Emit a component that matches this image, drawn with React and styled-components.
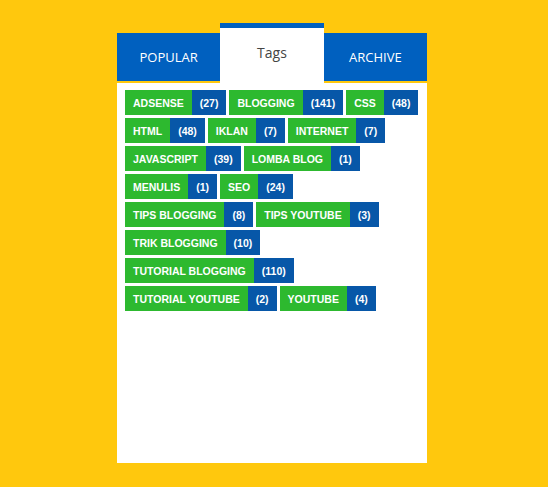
import React from "react";
import styled, { createGlobalStyle } from "styled-components";

const Global = createGlobalStyle`
  html, body { margin: 0; padding: 0; background: #ffc80d; }
  body { font-family: "Liberation Sans", Arial, sans-serif; }
`;

const Page = styled.div`
  padding: 23px 0 0 117px;
  min-height: 487px;
  box-sizing: border-box;
`;

const Widget = styled.div`
  width: 310px;
`;

const TabBar = styled.div`
  display: flex;
  align-items: flex-end;
  height: 60px;
`;

const Tab = styled.div`
  flex: 1;
  display: flex;
  align-items: center;
  justify-content: center;
  box-sizing: border-box;
  font-family: "Open Sans", sans-serif;
  ${(p) =>
    p.$active
      ? `
    height: 60px;
    background: #fff;
    border-top: 5px solid #0060bf;
    color: #444;
    font-size: 14px;
    padding-bottom: 6px;
  `
      : `
    height: 48px;
    margin-bottom: 2px;
    background: #0060bf;
    color: #fff;
    font-size: 13px;
  `}
`;

const Panel = styled.div`
  background: #fff;
  height: 380px;
  box-sizing: border-box;
  padding: 7px 8px 0 8px;
  display: flex;
  flex-wrap: wrap;
  align-content: flex-start;
  gap: 3px;
`;

const Tag = styled.div`
  display: flex;
  height: 25px;
  font-family: "Liberation Sans", Arial, sans-serif;
  font-weight: bold;
  font-size: 10.5px;
  color: #fff;
  text-transform: uppercase;
`;

const Label = styled.span`
  display: flex;
  align-items: center;
  padding: 0 8px;
  background: #2db92f;
`;

const Count = styled.span`
  display: flex;
  align-items: center;
  padding: 0 8px;
  background: #0757a8;
`;

const tags = [
  ["Adsense", 27],
  ["Blogging", 141],
  ["CSS", 48],
  ["HTML", 48],
  ["Iklan", 7],
  ["Internet", 7],
  ["Javascript", 39],
  ["Lomba Blog", 1],
  ["Menulis", 1],
  ["SEO", 24],
  ["Tips Blogging", 8],
  ["Tips Youtube", 3],
  ["Trik Blogging", 10],
  ["Tutorial Blogging", 110],
  ["Tutorial Youtube", 2],
  ["Youtube", 4],
];

export default function App() {
  return (
    <>
      <Global />
      <Page>
        <Widget>
          <TabBar>
            <Tab>POPULAR</Tab>
            <Tab $active>Tags</Tab>
            <Tab>ARCHIVE</Tab>
          </TabBar>
          <Panel>
            {tags.map(([name, n]) => (
              <Tag key={name}>
                <Label>{name}</Label>
                <Count>({n})</Count>
              </Tag>
            ))}
          </Panel>
        </Widget>
      </Page>
    </>
  );
}
